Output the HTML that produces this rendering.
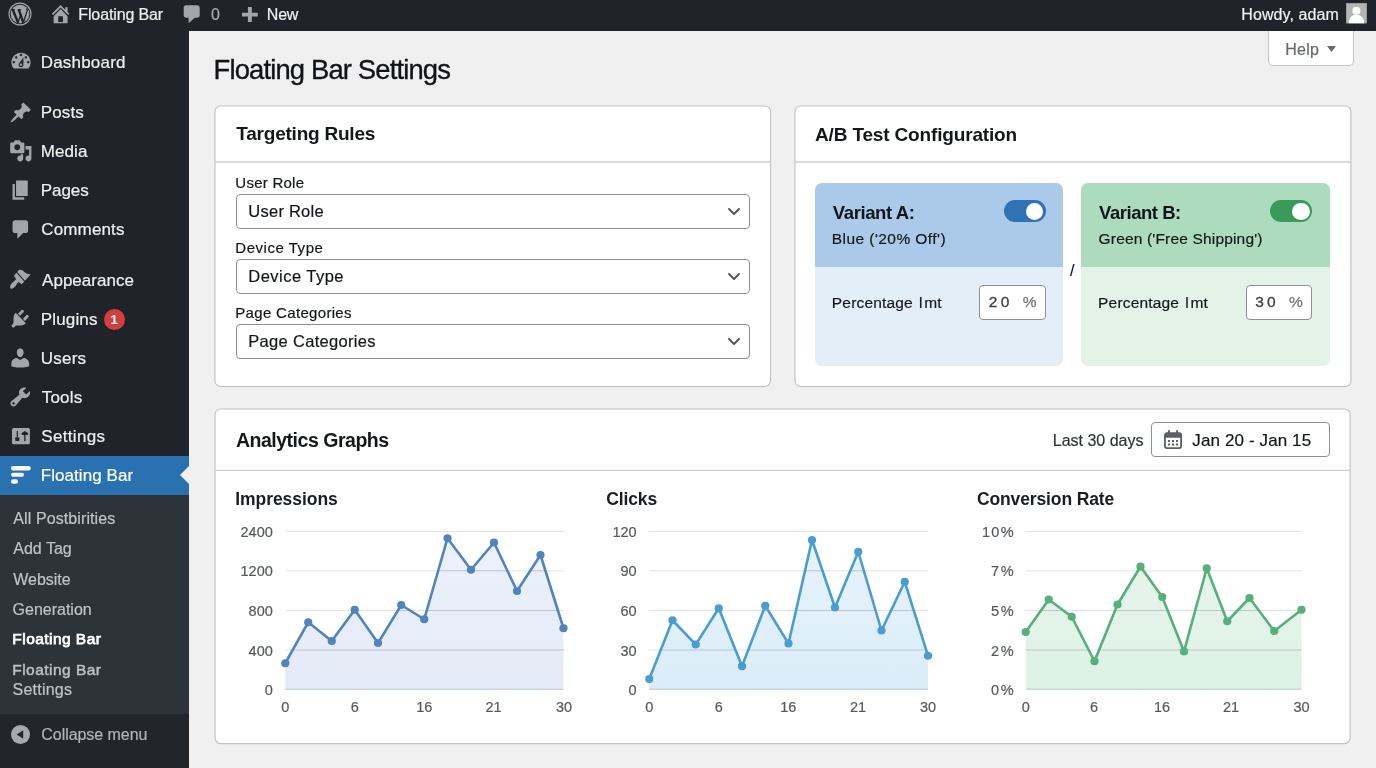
<!DOCTYPE html>
<html lang="en">
<head>
<meta charset="utf-8">
<title>Floating Bar Settings</title>
<style>
*{box-sizing:border-box;margin:0;padding:0}
html,body{width:1376px;height:768px;overflow:hidden}
body{background:#f0f0f1;font-family:"Liberation Sans",Arial,Helvetica,sans-serif;color:#13171b;position:relative}
.t{position:absolute;white-space:nowrap;display:block}
.i{position:absolute;display:block;overflow:visible}
.b{position:absolute;display:block}
#adminbar{position:absolute;left:0;top:0;width:1376px;height:31px;background:#20242a}
#adminmenu{position:absolute;left:0;top:31px;width:189px;height:737px;background:#20242a}
#wpwrap{position:absolute;left:0;top:0;width:1376px;height:768px;overflow:hidden;will-change:transform}
.panel{position:absolute;background:#fff;border:1px solid #c5c6c9;border-radius:5px;box-shadow:0 1px 1px rgba(0,0,0,.10)}
.hr{position:absolute;left:0;right:0;height:1px;background:#c5c6c9}
.sel{position:absolute;height:35px;border:1px solid #8c8f94;border-radius:4px;background:#fff}
.inp{position:absolute;height:35px;border:1px solid #8c8f94;border-radius:4px;background:#fff}
</style>
</head>
<body>
<div id="wpwrap">
<div id="adminbar">
<svg class="i" style="left:8px;top:1.500px;width:24px;height:24px" viewBox="0 0 25 25"><defs><clipPath id="wpc"><circle cx="12.500" cy="12.500" r="9.700"/></clipPath></defs><circle cx="12.500" cy="12.500" r="11.400" fill="none" stroke="#a2a6ab" stroke-width="1.200"/><circle cx="12.500" cy="12.500" r="9.700" fill="#a2a6ab"/><g clip-path="url(#wpc)" fill="none" stroke="#20242a" stroke-linecap="butt"><path stroke-width="2.500" d="M4.800 7.600L10.600 21.800M11.200 7.600L16 21.600"/><path stroke-width="1.300" d="M10.500 21.400L13.300 12.800M16 21.400L20.300 8.200"/><path stroke-width="1.100" d="M3.500 8h3.800M10 8h3.800M18.500 7.400h3"/></g></svg>
<svg class="i" style="left:48.63px;top:1.81px;width:23.24px;height:23.55px" viewBox="0 0 20 20" preserveAspectRatio="none"><path fill="#a2a6ab" fill-rule="evenodd" d="M16 8.5l1.530 1.530-1.060 1.060L10 4.620l-6.470 6.470-1.060-1.060L10 2.500l4 4v-2h2v4zm-6-2.460l6 5.990V18H4v-5.970zM12 17v-5H8v5h4z"/></svg>
<span class="t" style="left:78.29px;top:6px;font-size:16px;line-height:17px;letter-spacing:-0.126px;color:#f0f0f1;-webkit-text-stroke:0.2px #f0f0f1;">Floating Bar</span>
<svg class="i" style="left:180.31px;top:3.25px;width:24.62px;height:22.50px" viewBox="0 0 20 20" preserveAspectRatio="none"><path fill="#a2a6ab" fill-rule="evenodd" d="M5 2h9c1.100 0 2 .9 2 2v7c0 1.100-.9 2-2 2h-2l-5 5v-5H5c-1.100 0-2-.9-2-2V4c0-1.100.9-2 2-2z"/></svg>
<span class="t" style="left:210.98px;top:6px;font-size:16px;line-height:17px;color:#a7aaad;-webkit-text-stroke:0.2px #a7aaad;">0</span>
<svg class="i" style="left:242px;top:6.5px;width:15.75px;height:15px" viewBox="0 0 16 16" preserveAspectRatio="none"><path fill="#a2a6ab" d="M6 0h4v6h6v4h-6v6H6v-6H0V6h6z"/></svg>
<span class="t" style="left:266.79px;top:6px;font-size:16px;line-height:17px;letter-spacing:-0.210px;color:#f0f0f1;-webkit-text-stroke:0.2px #f0f0f1;">New</span>
<span class="t" style="left:1241.29px;top:6px;font-size:16px;line-height:17px;letter-spacing:0.103px;color:#f0f0f1;-webkit-text-stroke:0.2px #f0f0f1;">Howdy, adam</span>
<svg class="i" style="left:1346.25px;top:3.25px;width:20.75px;height:20.25px" viewBox="0 0 20 20" preserveAspectRatio="none"><rect width="20" height="20" fill="#b4b4b4"/><rect x=".4" y=".4" width="19.2" height="19.2" fill="none" stroke="#9a9a9a" stroke-width=".8"/><circle cx="10" cy="7.6" r="3.9" fill="#fff"/><path fill="#fff" d="M2.600 20c0-5.200 3.100-8.300 7.400-8.300s7.400 3.100 7.400 8.300z"/></svg>
</div>
<div id="adminmenu"></div>
<div class="b" style="left:0;top:455.5px;width:189px;height:39.5px;background:#2a71b0"></div>
<div class="b" style="left:0;top:495px;width:189px;height:219px;background:#2d3339"></div>
<div class="b" style="left:0;top:714px;width:189px;height:54px;background:#22262b"></div>
<svg class="i" style="left:180px;top:466px;width:9px;height:18px" viewBox="0 0 9 18"><path fill="#f0f0f1" d="M9 0L0 9l9 9z"/></svg>
<svg class="i" style="left:8.59px;top:49.37px;width:24.06px;height:24.23px" viewBox="0 0 20 20" preserveAspectRatio="none"><path fill="#a2a6ab" fill-rule="evenodd" d="M3.760 16h12.480c1.100-1.370 1.760-3.110 1.760-5 0-4.420-3.580-8-8-8s-8 3.580-8 8c0 1.890.66 3.630 1.760 5zM10 4c.55 0 1 .45 1 1s-.45 1-1 1-1-.45-1-1 .45-1 1-1zM6 6c.55 0 1 .45 1 1s-.45 1-1 1-1-.45-1-1 .45-1 1-1zm8 0c.55 0 1 .45 1 1s-.45 1-1 1-1-.45-1-1 .45-1 1-1zm-5.370 5.550L12 7v6c0 1.100-.9 2-2 2s-2-.9-2-2c0-.57.24-1.080.63-1.450zM4 10c.55 0 1 .45 1 1s-.45 1-1 1-1-.45-1-1 .45-1 1-1zm12 0c.55 0 1 .45 1 1s-.45 1-1 1-1-.45-1-1 .45-1 1-1zm-5 3c0-.55-.45-1-1-1s-1 .45-1 1 .45 1 1 1 1-.45 1-1z"/></svg>
<span class="t" style="left:40.71px;top:53px;font-size:17px;line-height:19px;letter-spacing:0.202px;color:#f0f0f1;-webkit-text-stroke:0.2px #f0f0f1;">Dashboard</span>
<svg class="i" style="left:8.62px;top:100.60px;width:23.50px;height:23.28px" viewBox="0 0 20 20" preserveAspectRatio="none"><path fill="#a2a6ab" fill-rule="evenodd" d="M10.440 3.020l1.820-1.820 6.360 6.350-1.830 1.820c-1.050-.68-2.480-.57-3.410.36l-.75.75c-.92.93-1.040 2.350-.35 3.410l-1.830 1.820-2.410-2.410-2.800 2.790c-.42.42-3.380 2.710-3.800 2.290s1.860-3.390 2.280-3.810l2.790-2.790L4.100 9.360l1.830-1.820c1.050.69 2.480.57 3.400-.36l.75-.75c.93-.92 1.050-2.350.36-3.410z"/></svg>
<span class="t" style="left:40.71px;top:103px;font-size:17px;line-height:19px;letter-spacing:0.135px;color:#f0f0f1;-webkit-text-stroke:0.2px #f0f0f1;">Posts</span>
<svg class="i" style="left:8.82px;top:139.32px;width:23.61px;height:23.61px" viewBox="0 0 20 20" preserveAspectRatio="none"><path fill="#a2a6ab" fill-rule="evenodd" d="M13 11V4c0-.55-.45-1-1-1h-1.670L9 1H5L3.670 3H2c-.55 0-1 .45-1 1v7c0 .55.45 1 1 1h10c.55 0 1-.45 1-1zM7 4.500c1.380 0 2.500 1.120 2.500 2.500S8.380 9.500 7 9.500 4.500 8.380 4.500 7 5.620 4.500 7 4.500zM14 6h5v10.500c0 1.380-1.120 2.500-2.500 2.500S14 17.880 14 16.500s1.120-2.500 2.500-2.500c.17 0 .34.02.5.05V9h-3V6zm-4 8.050V13h2v3.500c0 1.380-1.120 2.500-2.500 2.500S7 17.880 7 16.500 8.120 14 9.500 14c.17 0 .34.02.5.05z"/></svg>
<span class="t" style="left:40.71px;top:142px;font-size:17px;line-height:19px;letter-spacing:0.096px;color:#f0f0f1;-webkit-text-stroke:0.2px #f0f0f1;">Media</span>
<svg class="i" style="left:8.98px;top:178.34px;width:23.46px;height:24.06px" viewBox="0 0 20 20" preserveAspectRatio="none"><path fill="#a2a6ab" fill-rule="evenodd" d="M6 15V2h10v13H6zm-1 1h8v2H3V5h2v11z"/></svg>
<span class="t" style="left:40.71px;top:181px;font-size:17px;line-height:19px;letter-spacing:-0.035px;color:#f0f0f1;-webkit-text-stroke:0.2px #f0f0f1;">Pages</span>
<svg class="i" style="left:8.67px;top:217.69px;width:23.85px;height:23.12px" viewBox="0 0 20 20" preserveAspectRatio="none"><path fill="#a2a6ab" fill-rule="evenodd" d="M5 2h9c1.100 0 2 .9 2 2v7c0 1.100-.9 2-2 2h-2l-5 5v-5H5c-1.100 0-2-.9-2-2V4c0-1.100.9-2 2-2z"/></svg>
<span class="t" style="left:41.23px;top:220px;font-size:17px;line-height:19px;letter-spacing:0.155px;color:#f0f0f1;-webkit-text-stroke:0.2px #f0f0f1;">Comments</span>
<svg class="i" style="left:8.90px;top:267.27px;width:22.07px;height:24.84px" viewBox="0 0 20 20" preserveAspectRatio="none"><path fill="#a2a6ab" fill-rule="evenodd" d="M14.480 11.060L7.410 3.990l1.500-1.500c.5-.56 2.300-.47 3.510.32 1.210.8 1.430 1.280 2.910 2.100 1.180.64 2.450 1.260 4.450.85zm-.71.71L6.700 4.700 4.930 6.470c-.39.39-.39 1.020 0 1.410l1.060 1.060c.39.39.39 1.030 0 1.420-.6.6-1.430 1.110-2.210 1.690-.35.26-.7.53-1.010.84C1.430 14.230.4 16.080 1.400 17.070c.99 1 2.840-.03 4.180-1.360.31-.31.58-.66.85-1.020.57-.78 1.080-1.610 1.690-2.210.39-.39 1.020-.39 1.410 0l1.060 1.060c.39.39 1.020.39 1.410 0z"/></svg>
<span class="t" style="left:42.07px;top:271px;font-size:17px;line-height:19px;letter-spacing:0.017px;color:#f0f0f1;-webkit-text-stroke:0.2px #f0f0f1;">Appearance</span>
<svg class="i" style="left:9.17px;top:307.45px;width:22.44px;height:23.23px" viewBox="0 0 20 20" preserveAspectRatio="none"><path fill="#a2a6ab" fill-rule="evenodd" d="M13.110 4.360L9.870 7.600 8 5.730l3.240-3.240c.35-.34 1.050-.2 1.560.32.52.51.66 1.210.31 1.550zm-8 1.770l.91-1.120 9.010 9.010-1.190.84c-.71.71-2.630 1.160-3.820 1.160H6.140L4.900 17.260c-.59.59-1.540.59-2.120 0-.59-.58-.59-1.530 0-2.120l1.240-1.240v-3.880c0-1.130.4-3.190 1.090-3.890zm7.260 3.970l3.240-3.240c.34-.35 1.040-.21 1.550.31.520.51.66 1.210.31 1.550l-3.240 3.250z"/></svg>
<span class="t" style="left:40.71px;top:310px;font-size:17px;line-height:19px;letter-spacing:0.174px;color:#f0f0f1;-webkit-text-stroke:0.2px #f0f0f1;">Plugins</span>
<svg class="i" style="left:8.37px;top:345.62px;width:24.52px;height:23.84px" viewBox="0 0 20 20" preserveAspectRatio="none"><path fill="#a2a6ab" fill-rule="evenodd" d="M10 9.250c-2.270 0-2.730-3.440-2.730-3.440C7 4.020 7.820 2 9.970 2c2.160 0 2.980 2.020 2.710 3.810 0 0-.41 3.440-2.680 3.440zm0 2.570L12.720 10c2.390 0 4.520 2.330 4.520 4.530v2.490s-3.650 1.130-7.240 1.130c-3.650 0-7.240-1.130-7.240-1.130v-2.490c0-2.250 1.940-4.480 4.470-4.480z"/></svg>
<span class="t" style="left:40.79px;top:349px;font-size:17px;line-height:19px;letter-spacing:0.208px;color:#f0f0f1;-webkit-text-stroke:0.2px #f0f0f1;">Users</span>
<svg class="i" style="left:8.30px;top:384.88px;width:24.53px;height:23.75px" viewBox="0 0 20 20" preserveAspectRatio="none"><path fill="#a2a6ab" fill-rule="evenodd" d="M16.680 9.770c-1.340 1.340-3.300 1.670-4.950.99l-5.410 6.520c-.99.99-2.590.99-3.580 0s-.99-2.590 0-3.570l6.520-5.420c-.68-1.650-.35-3.610.99-4.950 1.280-1.280 3.120-1.620 4.720-1.060l-2.890 2.890 2.820 2.820 2.860-2.870c.53 1.580.18 3.390-1.080 4.650zM3.810 16.210c.4.39 1.040.39 1.430 0 .4-.4.4-1.040 0-1.430-.39-.4-1.030-.4-1.430 0-.39.39-.39 1.030 0 1.430z"/></svg>
<span class="t" style="left:41.73px;top:388px;font-size:17px;line-height:19px;letter-spacing:0.214px;color:#f0f0f1;-webkit-text-stroke:0.2px #f0f0f1;">Tools</span>
<svg class="i" style="left:12.100px;top:427.800px;width:17.900px;height:16.300px" viewBox="0 0 17.900 16.300"><rect width="17.900" height="16.300" rx="1.600" fill="#a2a6ab"/><g fill="#20242a"><rect x="4.700" y="3" width="1.200" height="7.500"/><path d="M3 9.600h4.600l-.5 3.400H3.500z"/><rect x="12.200" y="7" width="1.300" height="6.200"/><path d="M9.400 5.200l3.400-2.300 3.500 2.300-.6 1.900H10z"/></g></svg>
<span class="t" style="left:41.32px;top:427px;font-size:17px;line-height:19px;letter-spacing:0.325px;color:#f0f0f1;-webkit-text-stroke:0.2px #f0f0f1;">Settings</span>
<div class="b" style="left:103.5px;top:308.75px;width:21.5px;height:21.5px;border-radius:50%;background:#d2403e"></div>
<span class="t" style="left:110.46px;top:312px;font-size:13px;line-height:15px;color:#fff;font-weight:700;">1</span>
<svg class="i" style="left:10.75px;top:466.25px;width:19.75px;height:17.75px" viewBox="0 0 19.75 17.75"><rect x="0" y="0" width="19.75" height="4.5" rx="2.1" fill="#f3f8fd"/><rect x="0" y="6.75" width="13" height="4.1" rx="2" fill="#f3f8fd"/><rect x="0" y="13.25" width="7" height="4.5" rx="2.1" fill="#f3f8fd"/></svg>
<span class="t" style="left:40.71px;top:466px;font-size:17px;line-height:19px;letter-spacing:0.074px;color:#fff;-webkit-text-stroke:0.2px #fff;">Floating Bar</span>
<span class="t" style="left:13.32px;top:510px;font-size:16px;line-height:17px;letter-spacing:0.095px;color:#c0c3c7;-webkit-text-stroke:0.2px #c0c3c7;">All Postbirities</span>
<span class="t" style="left:13.32px;top:540px;font-size:16px;line-height:17px;letter-spacing:-0.010px;color:#c0c3c7;-webkit-text-stroke:0.2px #c0c3c7;">Add Tag</span>
<span class="t" style="left:13.27px;top:571px;font-size:16px;line-height:17px;letter-spacing:-0.028px;color:#c0c3c7;-webkit-text-stroke:0.2px #c0c3c7;">Website</span>
<span class="t" style="left:12.55px;top:601px;font-size:16px;line-height:17px;color:#c0c3c7;-webkit-text-stroke:0.2px #c0c3c7;">Generation</span>
<span class="t" style="left:12.35px;top:630px;font-size:15.5px;line-height:17px;letter-spacing:0.451px;color:#fff;-webkit-text-stroke:0.75px #fff;">Floating Bar</span>
<span class="t" style="left:12.23px;top:661px;font-size:15.5px;line-height:17px;letter-spacing:0.474px;color:#bcbfc3;-webkit-text-stroke:0.5px #bcbfc3;">Floating Bar <span class="t" style="left:0.38px;top:20px;font-size:16px;line-height:17px;letter-spacing:0.222px;color:#c0c3c7;-webkit-text-stroke:0.2px #c0c3c7;">Settings</span></span>
<svg class="i" style="left:11.25px;top:724.75px;width:19px;height:19px" viewBox="0 0 19 19"><circle cx="9.5" cy="9.5" r="9.5" fill="#a7aaad"/><path fill="#22262b" d="M12.200 5.300v8.400L5.600 9.500z"/></svg>
<span class="t" style="left:41.28px;top:726px;font-size:16px;line-height:17px;letter-spacing:-0.046px;color:#b2b6ba;-webkit-text-stroke:0.2px #b2b6ba;">Collapse menu</span>
<div class="b" style="left:1268px;top:31px;width:86px;height:35px;background:#fff;border:1px solid #c5c6c9;border-top:none;border-radius:0 0 5px 5px"></div>
<span class="t" style="left:1285.29px;top:41px;font-size:16px;line-height:17px;letter-spacing:0.207px;color:#646970;-webkit-text-stroke:0.2px #646970;">Help</span>
<svg class="i" style="left:1327px;top:46px;width:9px;height:6px" viewBox="0 0 9 6"><path fill="#646970" d="M0 0h9L4.500 6z"/></svg>
<h1 class="t" style="font-weight:400;margin:0;left:213.53px;top:54px;font-size:27.4px;line-height:31px;letter-spacing:-0.844px;color:#101418;-webkit-text-stroke:0.35px #101418;">Floating Bar Settings</h1>
<svg class="i" style="left:213.10px;top:103.60px;width:559.50px;height:285.50px" viewBox="0 0 559.50 285.50"><rect x="2" y="2.300" width="555.50" height="280.90" rx="5.500" fill="rgba(0,0,0,.03)"/><rect x="2" y="2" width="555.50" height="280.50" rx="5.500" fill="#fff" stroke="#c0c2c5" stroke-width="1.15"/><line x1="2" y1="58.00" x2="557.50" y2="58.00" stroke="#cdced1" stroke-width="1.400"/></svg>
<span class="t" style="left:236.29px;top:123px;font-size:19px;line-height:21px;letter-spacing:-0.226px;color:#13171b;font-weight:700;">Targeting Rules</span>
<span class="t" style="left:235.34px;top:174px;font-size:15px;line-height:17px;letter-spacing:0.253px;color:#13171b;-webkit-text-stroke:0.2px #13171b;">User Role</span>
<div class="sel" style="left:236px;top:194px;width:514px"></div>
<span class="t" style="left:248.33px;top:202px;font-size:16.5px;line-height:18px;letter-spacing:0.242px;color:#13171b;-webkit-text-stroke:0.2px #13171b;">User Role</span>
<svg class="i" style="left:727.6px;top:208.4px;width:12px;height:7px" viewBox="0 0 12 7"><path fill="none" stroke="#50565c" stroke-width="1.900" stroke-linecap="round" stroke-linejoin="round" d="M1 1l5 5 5-5"/></svg>
<span class="t" style="left:235.27px;top:239px;font-size:15px;line-height:17px;letter-spacing:0.533px;color:#13171b;-webkit-text-stroke:0.2px #13171b;">Device Type</span>
<div class="sel" style="left:236px;top:259px;width:514px"></div>
<span class="t" style="left:248.25px;top:267px;font-size:16.5px;line-height:18px;letter-spacing:0.479px;color:#13171b;-webkit-text-stroke:0.2px #13171b;">Device Type</span>
<svg class="i" style="left:727.6px;top:273.4px;width:12px;height:7px" viewBox="0 0 12 7"><path fill="none" stroke="#50565c" stroke-width="1.900" stroke-linecap="round" stroke-linejoin="round" d="M1 1l5 5 5-5"/></svg>
<span class="t" style="left:235.27px;top:304px;font-size:15px;line-height:17px;letter-spacing:0.324px;color:#13171b;-webkit-text-stroke:0.2px #13171b;">Page Categories</span>
<div class="sel" style="left:236px;top:324px;width:514px"></div>
<span class="t" style="left:248.25px;top:332px;font-size:16.5px;line-height:18px;letter-spacing:0.317px;color:#13171b;-webkit-text-stroke:0.2px #13171b;">Page Categories</span>
<svg class="i" style="left:727.6px;top:338.4px;width:12px;height:7px" viewBox="0 0 12 7"><path fill="none" stroke="#50565c" stroke-width="1.900" stroke-linecap="round" stroke-linejoin="round" d="M1 1l5 5 5-5"/></svg>
<svg class="i" style="left:792.50px;top:103.60px;width:559.90px;height:285.50px" viewBox="0 0 559.90 285.50"><rect x="2" y="2.300" width="555.90" height="280.90" rx="5.500" fill="rgba(0,0,0,.03)"/><rect x="2" y="2" width="555.90" height="280.50" rx="5.500" fill="#fff" stroke="#c0c2c5" stroke-width="1.15"/><line x1="2" y1="58.00" x2="557.90" y2="58.00" stroke="#cdced1" stroke-width="1.400"/></svg>
<span class="t" style="left:815.02px;top:124px;font-size:19px;line-height:21px;letter-spacing:-0.158px;color:#13171b;font-weight:700;">A/B Test Configuration</span>
<div class="b" style="left:815px;top:183px;width:248px;height:182.500px;border-radius:7px;background:#e4eef8;overflow:hidden"><div class="b" style="left:0;top:0;width:100%;height:84px;background:#abc9e8"></div></div>
<span class="t" style="left:832.87px;top:202px;font-size:18.5px;line-height:21px;letter-spacing:-0.396px;color:#10151a;font-weight:700;">Variant A:</span>
<span class="t" style="left:831.83px;top:230px;font-size:15.5px;line-height:17px;letter-spacing:0.433px;color:#13171b;-webkit-text-stroke:0.2px #13171b;">Blue ('20% Off')</span>
<div class="b" style="left:1003.6px;top:200px;width:42.500px;height:22px;border-radius:11px;background:#2f73b5"></div>
<div class="b" style="left:1026.15px;top:202.650px;width:17.200px;height:17.200px;border-radius:50%;background:#fff"></div>
<span class="t" style="word-spacing:1.56px;left:831.83px;top:294px;font-size:15.5px;line-height:17px;letter-spacing:0.174px;color:#13171b;-webkit-text-stroke:0.2px #13171b;">Percentage <span style="letter-spacing:1.9px">l</span><span style="letter-spacing:0.2px">mt</span></span>
<div class="inp" style="left:979px;top:285px;width:67px"></div>
<span class="t" style="left:988.80px;top:293px;font-size:15.5px;line-height:17px;letter-spacing:3.294px;color:#3c4248;-webkit-text-stroke:0.35px #3c4248;">20</span>
<span class="t" style="left:1022.77px;top:293px;font-size:15.5px;line-height:17px;color:#70757b;-webkit-text-stroke:0.25px #70757b;">%</span>
<span class="t" style="left:1070.10px;top:262px;font-size:16px;line-height:17px;color:#13171b;-webkit-text-stroke:0.2px #13171b;">/</span>
<div class="b" style="left:1081px;top:183px;width:249px;height:182.500px;border-radius:7px;background:#e3f3e8;overflow:hidden"><div class="b" style="left:0;top:0;width:100%;height:84px;background:#addbbd"></div></div>
<span class="t" style="left:1099.12px;top:202px;font-size:18.5px;line-height:21px;letter-spacing:-0.472px;color:#10151a;font-weight:700;">Variant B:</span>
<span class="t" style="left:1098.57px;top:230px;font-size:15.5px;line-height:17px;letter-spacing:0.173px;color:#13171b;-webkit-text-stroke:0.2px #13171b;">Green ('Free Shipping')</span>
<div class="b" style="left:1269.85px;top:200px;width:42.500px;height:22px;border-radius:11px;background:#3a9a5c"></div>
<div class="b" style="left:1292.3999999999999px;top:202.650px;width:17.200px;height:17.200px;border-radius:50%;background:#fff"></div>
<span class="t" style="word-spacing:1.56px;left:1098.08px;top:294px;font-size:15.5px;line-height:17px;letter-spacing:0.174px;color:#13171b;-webkit-text-stroke:0.2px #13171b;">Percentage <span style="letter-spacing:1.9px">l</span><span style="letter-spacing:0.2px">mt</span></span>
<div class="inp" style="left:1246px;top:285px;width:66px"></div>
<span class="t" style="left:1255.24px;top:293px;font-size:15.5px;line-height:17px;letter-spacing:3.107px;color:#3c4248;-webkit-text-stroke:0.35px #3c4248;">30</span>
<span class="t" style="left:1289.02px;top:293px;font-size:15.5px;line-height:17px;color:#70757b;-webkit-text-stroke:0.25px #70757b;">%</span>
<svg class="i" style="left:213.20px;top:407.30px;width:1139.10px;height:339.60px" viewBox="0 0 1139.10 339.60"><rect x="2" y="2.300" width="1135.10" height="335.00" rx="5.500" fill="rgba(0,0,0,.03)"/><rect x="2" y="2" width="1135.10" height="334.60" rx="5.500" fill="#fff" stroke="#c0c2c5" stroke-width="1.15"/><line x1="2" y1="63.40" x2="1137.10" y2="63.40" stroke="#cdced1" stroke-width="1.400"/></svg>
<span class="t" style="left:235.91px;top:429px;font-size:19.5px;line-height:22px;letter-spacing:-0.480px;color:#13171b;font-weight:700;">Analytics Graphs</span>
<span class="t" style="left:1052.79px;top:432px;font-size:16px;line-height:17px;color:#2f353b;-webkit-text-stroke:0.2px #2f353b;">Last 30 days</span>
<div class="sel" style="left:1151px;top:422px;width:179px"></div>
<svg class="i" style="left:1164px;top:430px;width:18px;height:19px" viewBox="0 0 18 19"><rect x=".9" y="3.200" width="16.200" height="14.900" rx="2" fill="none" stroke="#5a6068" stroke-width="1.800"/><path fill="#5a6068" d="M.9 5.200a2 2 0 0 1 2-2h12.200a2 2 0 0 1 2 2v2.600H.9z"/><rect x="3.900" y="0" width="2" height="4.500" rx="1" fill="#5a6068"/><rect x="12.100" y="0" width="2" height="4.500" rx="1" fill="#5a6068"/><g fill="#5a6068"><rect x="4" y="10" width="2" height="2"/><rect x="8" y="10" width="2" height="2"/><rect x="12" y="10" width="2" height="2"/><rect x="4" y="13.500" width="2" height="2"/><rect x="8" y="13.500" width="2" height="2"/><rect x="12" y="13.500" width="2" height="2"/></g></svg>
<span class="t" style="left:1192.33px;top:431px;font-size:17px;line-height:19px;letter-spacing:0.115px;color:#13171b;-webkit-text-stroke:0.2px #13171b;">Jan 20 - Jan 15</span>
<span class="t" style="left:235.23px;top:489px;font-size:17.5px;line-height:20px;letter-spacing:-0.050px;color:#1a1e23;font-weight:700;">Impressions</span>
<svg class="i" style="left:0;top:0;width:1376px;height:768px" viewBox="0 0 1376 768"><clipPath id="climp"><polygon points="285.25,690.25 285.25,663.25 308.25,622.25 331.75,641 354.75,609.75 378,643 401.25,605 424.25,619.25 447.5,538.25 471,569.75 494,542.5 517,591 540.5,555 563.5,628.25 563.5,690.25"/></clipPath><line x1="285.25" y1="531.5" x2="564" y2="531.5" stroke="#e3e4e7" stroke-width="1.200"/><line x1="285.25" y1="570.75" x2="564" y2="570.75" stroke="#e3e4e7" stroke-width="1.200"/><line x1="285.25" y1="610.5" x2="564" y2="610.5" stroke="#e3e4e7" stroke-width="1.200"/><line x1="285.25" y1="650.0" x2="564" y2="650.0" stroke="#e3e4e7" stroke-width="1.200"/><line x1="285.25" y1="689.25" x2="564" y2="689.25" stroke="#e3e4e7" stroke-width="1.200"/><linearGradient id="grimp" gradientUnits="userSpaceOnUse" x1="0" y1="535" x2="0" y2="689"><stop offset="0" stop-color="rgb(205,218,241)" stop-opacity=".36"/><stop offset="1" stop-color="rgb(205,218,241)" stop-opacity=".56"/></linearGradient><polygon fill="url(#grimp)" points="285.25,689.25 285.25,663.25 308.25,622.25 331.75,641 354.75,609.75 378,643 401.25,605 424.25,619.25 447.5,538.25 471,569.75 494,542.5 517,591 540.5,555 563.5,628.25 563.5,689.25"/><g clip-path="url(#climp)"><line x1="285.25" y1="531.5" x2="564" y2="531.5" stroke="rgba(95,105,125,.22)" stroke-width="1.200"/><line x1="285.25" y1="570.75" x2="564" y2="570.75" stroke="rgba(95,105,125,.22)" stroke-width="1.200"/><line x1="285.25" y1="610.5" x2="564" y2="610.5" stroke="rgba(95,105,125,.22)" stroke-width="1.200"/><line x1="285.25" y1="650.0" x2="564" y2="650.0" stroke="rgba(95,105,125,.22)" stroke-width="1.200"/><line x1="285.25" y1="689.25" x2="564" y2="689.25" stroke="rgba(95,105,125,.22)" stroke-width="1.200"/></g><polyline fill="none" stroke="#5184bc" stroke-width="2.600" stroke-linejoin="round" stroke-linecap="round" points="285.25,663.25 308.25,622.25 331.75,641 354.75,609.75 378,643 401.25,605 424.25,619.25 447.5,538.25 471,569.75 494,542.5 517,591 540.5,555 563.5,628.25"/><circle cx="285.25" cy="663.25" r="4.100" fill="#5184bc"/><circle cx="308.25" cy="622.25" r="4.100" fill="#5184bc"/><circle cx="331.75" cy="641" r="4.100" fill="#5184bc"/><circle cx="354.75" cy="609.75" r="4.100" fill="#5184bc"/><circle cx="378" cy="643" r="4.100" fill="#5184bc"/><circle cx="401.25" cy="605" r="4.100" fill="#5184bc"/><circle cx="424.25" cy="619.25" r="4.100" fill="#5184bc"/><circle cx="447.5" cy="538.25" r="4.100" fill="#5184bc"/><circle cx="471" cy="569.75" r="4.100" fill="#5184bc"/><circle cx="494" cy="542.5" r="4.100" fill="#5184bc"/><circle cx="517" cy="591" r="4.100" fill="#5184bc"/><circle cx="540.5" cy="555" r="4.100" fill="#5184bc"/><circle cx="563.5" cy="628.25" r="4.100" fill="#5184bc"/></svg>
<span class="t" style="left:240.52px;top:524px;font-size:14.5px;line-height:16px;color:#55595f;-webkit-text-stroke:0.2px #55595f;">2400</span>
<span class="t" style="left:240.52px;top:563px;font-size:14.5px;line-height:16px;color:#55595f;-webkit-text-stroke:0.2px #55595f;">1200</span>
<span class="t" style="left:248.58px;top:603px;font-size:14.5px;line-height:16px;color:#55595f;-webkit-text-stroke:0.2px #55595f;">800</span>
<span class="t" style="left:248.58px;top:643px;font-size:14.5px;line-height:16px;color:#55595f;-webkit-text-stroke:0.2px #55595f;">400</span>
<span class="t" style="left:264.70px;top:682px;font-size:14.5px;line-height:16px;color:#55595f;-webkit-text-stroke:0.2px #55595f;">0</span>
<span class="t" style="left:281.22px;top:699px;font-size:14.5px;line-height:16px;color:#55595f;-webkit-text-stroke:0.2px #55595f;">0</span>
<span class="t" style="left:350.67px;top:699px;font-size:14.5px;line-height:16px;color:#55595f;-webkit-text-stroke:0.2px #55595f;">6</span>
<span class="t" style="left:416.31px;top:699px;font-size:14.5px;line-height:16px;color:#55595f;-webkit-text-stroke:0.2px #55595f;">16</span>
<span class="t" style="left:485.53px;top:699px;font-size:14.5px;line-height:16px;color:#55595f;-webkit-text-stroke:0.2px #55595f;">21</span>
<span class="t" style="left:555.95px;top:699px;font-size:14.5px;line-height:16px;color:#55595f;-webkit-text-stroke:0.2px #55595f;">30</span>
<span class="t" style="left:606.18px;top:489px;font-size:17.5px;line-height:20px;letter-spacing:-0.124px;color:#1a1e23;font-weight:700;">Clicks</span>
<svg class="i" style="left:0;top:0;width:1376px;height:768px" viewBox="0 0 1376 768"><clipPath id="clcli"><polygon points="649.25,690.25 649.25,679 672.5,620.25 695.75,644.5 718.75,608.25 742,666.25 765.25,605.75 788.5,643.5 812,540 835,607.5 858.25,551.75 881.5,630.5 904.75,581.75 928,655.75 928,690.25"/></clipPath><line x1="649.25" y1="531.5" x2="928.25" y2="531.5" stroke="#e3e4e7" stroke-width="1.200"/><line x1="649.25" y1="570.75" x2="928.25" y2="570.75" stroke="#e3e4e7" stroke-width="1.200"/><line x1="649.25" y1="610.5" x2="928.25" y2="610.5" stroke="#e3e4e7" stroke-width="1.200"/><line x1="649.25" y1="650.0" x2="928.25" y2="650.0" stroke="#e3e4e7" stroke-width="1.200"/><line x1="649.25" y1="689.25" x2="928.25" y2="689.25" stroke="#e3e4e7" stroke-width="1.200"/><linearGradient id="grcli" gradientUnits="userSpaceOnUse" x1="0" y1="535" x2="0" y2="689"><stop offset="0" stop-color="rgb(190,222,243)" stop-opacity=".36"/><stop offset="1" stop-color="rgb(190,222,243)" stop-opacity=".56"/></linearGradient><polygon fill="url(#grcli)" points="649.25,689.25 649.25,679 672.5,620.25 695.75,644.5 718.75,608.25 742,666.25 765.25,605.75 788.5,643.5 812,540 835,607.5 858.25,551.75 881.5,630.5 904.75,581.75 928,655.75 928,689.25"/><g clip-path="url(#clcli)"><line x1="649.25" y1="531.5" x2="928.25" y2="531.5" stroke="rgba(95,105,125,.22)" stroke-width="1.200"/><line x1="649.25" y1="570.75" x2="928.25" y2="570.75" stroke="rgba(95,105,125,.22)" stroke-width="1.200"/><line x1="649.25" y1="610.5" x2="928.25" y2="610.5" stroke="rgba(95,105,125,.22)" stroke-width="1.200"/><line x1="649.25" y1="650.0" x2="928.25" y2="650.0" stroke="rgba(95,105,125,.22)" stroke-width="1.200"/><line x1="649.25" y1="689.25" x2="928.25" y2="689.25" stroke="rgba(95,105,125,.22)" stroke-width="1.200"/></g><polyline fill="none" stroke="#4a9dd0" stroke-width="2.600" stroke-linejoin="round" stroke-linecap="round" points="649.25,679 672.5,620.25 695.75,644.5 718.75,608.25 742,666.25 765.25,605.75 788.5,643.5 812,540 835,607.5 858.25,551.75 881.5,630.5 904.75,581.75 928,655.75"/><circle cx="649.25" cy="679" r="4.100" fill="#4a9dd0"/><circle cx="672.5" cy="620.25" r="4.100" fill="#4a9dd0"/><circle cx="695.75" cy="644.5" r="4.100" fill="#4a9dd0"/><circle cx="718.75" cy="608.25" r="4.100" fill="#4a9dd0"/><circle cx="742" cy="666.25" r="4.100" fill="#4a9dd0"/><circle cx="765.25" cy="605.75" r="4.100" fill="#4a9dd0"/><circle cx="788.5" cy="643.5" r="4.100" fill="#4a9dd0"/><circle cx="812" cy="540" r="4.100" fill="#4a9dd0"/><circle cx="835" cy="607.5" r="4.100" fill="#4a9dd0"/><circle cx="858.25" cy="551.75" r="4.100" fill="#4a9dd0"/><circle cx="881.5" cy="630.5" r="4.100" fill="#4a9dd0"/><circle cx="904.75" cy="581.75" r="4.100" fill="#4a9dd0"/><circle cx="928" cy="655.75" r="4.100" fill="#4a9dd0"/></svg>
<span class="t" style="left:612.48px;top:524px;font-size:14.5px;line-height:16px;color:#55595f;-webkit-text-stroke:0.2px #55595f;">120</span>
<span class="t" style="left:620.54px;top:563px;font-size:14.5px;line-height:16px;color:#55595f;-webkit-text-stroke:0.2px #55595f;">90</span>
<span class="t" style="left:620.54px;top:603px;font-size:14.5px;line-height:16px;color:#55595f;-webkit-text-stroke:0.2px #55595f;">60</span>
<span class="t" style="left:620.54px;top:643px;font-size:14.5px;line-height:16px;color:#55595f;-webkit-text-stroke:0.2px #55595f;">30</span>
<span class="t" style="left:628.60px;top:682px;font-size:14.5px;line-height:16px;color:#55595f;-webkit-text-stroke:0.2px #55595f;">0</span>
<span class="t" style="left:645.22px;top:699px;font-size:14.5px;line-height:16px;color:#55595f;-webkit-text-stroke:0.2px #55595f;">0</span>
<span class="t" style="left:714.67px;top:699px;font-size:14.5px;line-height:16px;color:#55595f;-webkit-text-stroke:0.2px #55595f;">6</span>
<span class="t" style="left:780.21px;top:699px;font-size:14.5px;line-height:16px;color:#55595f;-webkit-text-stroke:0.2px #55595f;">16</span>
<span class="t" style="left:849.93px;top:699px;font-size:14.5px;line-height:16px;color:#55595f;-webkit-text-stroke:0.2px #55595f;">21</span>
<span class="t" style="left:919.95px;top:699px;font-size:14.5px;line-height:16px;color:#55595f;-webkit-text-stroke:0.2px #55595f;">30</span>
<span class="t" style="left:976.88px;top:489px;font-size:17.5px;line-height:20px;letter-spacing:-0.117px;color:#1a1e23;font-weight:700;">Conversion Rate</span>
<svg class="i" style="left:0;top:0;width:1376px;height:768px" viewBox="0 0 1376 768"><clipPath id="clcon"><polygon points="1025.75,690.25 1025.75,632 1048.75,599.5 1071.75,616.75 1094.5,661.25 1117.5,604.5 1140.5,566.5 1162.25,597 1184,651.5 1206.75,568.25 1227.25,621.25 1249.5,598 1274.25,631 1301.5,609.75 1301.5,690.25"/></clipPath><line x1="1025.75" y1="531.5" x2="1301.75" y2="531.5" stroke="#e3e4e7" stroke-width="1.200"/><line x1="1025.75" y1="570.75" x2="1301.75" y2="570.75" stroke="#e3e4e7" stroke-width="1.200"/><line x1="1025.75" y1="610.5" x2="1301.75" y2="610.5" stroke="#e3e4e7" stroke-width="1.200"/><line x1="1025.75" y1="650.0" x2="1301.75" y2="650.0" stroke="#e3e4e7" stroke-width="1.200"/><line x1="1025.75" y1="689.25" x2="1301.75" y2="689.25" stroke="#e3e4e7" stroke-width="1.200"/><linearGradient id="grcon" gradientUnits="userSpaceOnUse" x1="0" y1="535" x2="0" y2="689"><stop offset="0" stop-color="rgb(195,230,208)" stop-opacity=".36"/><stop offset="1" stop-color="rgb(195,230,208)" stop-opacity=".56"/></linearGradient><polygon fill="url(#grcon)" points="1025.75,689.25 1025.75,632 1048.75,599.5 1071.75,616.75 1094.5,661.25 1117.5,604.5 1140.5,566.5 1162.25,597 1184,651.5 1206.75,568.25 1227.25,621.25 1249.5,598 1274.25,631 1301.5,609.75 1301.5,689.25"/><g clip-path="url(#clcon)"><line x1="1025.75" y1="531.5" x2="1301.75" y2="531.5" stroke="rgba(95,105,125,.22)" stroke-width="1.200"/><line x1="1025.75" y1="570.75" x2="1301.75" y2="570.75" stroke="rgba(95,105,125,.22)" stroke-width="1.200"/><line x1="1025.75" y1="610.5" x2="1301.75" y2="610.5" stroke="rgba(95,105,125,.22)" stroke-width="1.200"/><line x1="1025.75" y1="650.0" x2="1301.75" y2="650.0" stroke="rgba(95,105,125,.22)" stroke-width="1.200"/><line x1="1025.75" y1="689.25" x2="1301.75" y2="689.25" stroke="rgba(95,105,125,.22)" stroke-width="1.200"/></g><polyline fill="none" stroke="#56b07b" stroke-width="2.600" stroke-linejoin="round" stroke-linecap="round" points="1025.75,632 1048.75,599.5 1071.75,616.75 1094.5,661.25 1117.5,604.5 1140.5,566.5 1162.25,597 1184,651.5 1206.75,568.25 1227.25,621.25 1249.5,598 1274.25,631 1301.5,609.75"/><circle cx="1025.75" cy="632" r="4.100" fill="#56b07b"/><circle cx="1048.75" cy="599.5" r="4.100" fill="#56b07b"/><circle cx="1071.75" cy="616.75" r="4.100" fill="#56b07b"/><circle cx="1094.5" cy="661.25" r="4.100" fill="#56b07b"/><circle cx="1117.5" cy="604.5" r="4.100" fill="#56b07b"/><circle cx="1140.5" cy="566.5" r="4.100" fill="#56b07b"/><circle cx="1162.25" cy="597" r="4.100" fill="#56b07b"/><circle cx="1184" cy="651.5" r="4.100" fill="#56b07b"/><circle cx="1206.75" cy="568.25" r="4.100" fill="#56b07b"/><circle cx="1227.25" cy="621.25" r="4.100" fill="#56b07b"/><circle cx="1249.5" cy="598" r="4.100" fill="#56b07b"/><circle cx="1274.25" cy="631" r="4.100" fill="#56b07b"/><circle cx="1301.5" cy="609.75" r="4.100" fill="#56b07b"/></svg>
<span class="t" style="left:981.90px;top:524px;font-size:14.5px;line-height:16px;letter-spacing:1.397px;color:#55595f;-webkit-text-stroke:0.2px #55595f;">10%</span>
<span class="t" style="left:990.91px;top:563px;font-size:14.5px;line-height:16px;letter-spacing:1.845px;color:#55595f;-webkit-text-stroke:0.2px #55595f;">7%</span>
<span class="t" style="left:991.07px;top:603px;font-size:14.5px;line-height:16px;letter-spacing:1.685px;color:#55595f;-webkit-text-stroke:0.2px #55595f;">5%</span>
<span class="t" style="left:990.92px;top:643px;font-size:14.5px;line-height:16px;letter-spacing:1.830px;color:#55595f;-webkit-text-stroke:0.2px #55595f;">2%</span>
<span class="t" style="left:991.08px;top:682px;font-size:14.5px;line-height:16px;letter-spacing:1.671px;color:#55595f;-webkit-text-stroke:0.2px #55595f;">0%</span>
<span class="t" style="left:1021.72px;top:699px;font-size:14.5px;line-height:16px;color:#55595f;-webkit-text-stroke:0.2px #55595f;">0</span>
<span class="t" style="left:1089.92px;top:699px;font-size:14.5px;line-height:16px;color:#55595f;-webkit-text-stroke:0.2px #55595f;">6</span>
<span class="t" style="left:1153.96px;top:699px;font-size:14.5px;line-height:16px;color:#55595f;-webkit-text-stroke:0.2px #55595f;">16</span>
<span class="t" style="left:1222.93px;top:699px;font-size:14.5px;line-height:16px;color:#55595f;-webkit-text-stroke:0.2px #55595f;">21</span>
<span class="t" style="left:1293.45px;top:699px;font-size:14.5px;line-height:16px;color:#55595f;-webkit-text-stroke:0.2px #55595f;">30</span>
</div>
</body>
</html>
